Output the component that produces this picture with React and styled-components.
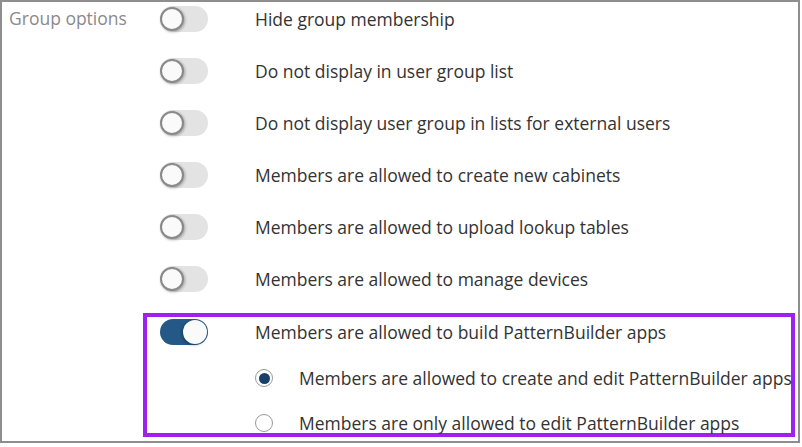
import React from "react";
import styled, { createGlobalStyle } from "styled-components";

const Global = createGlobalStyle`
  html, body { margin: 0; padding: 0; background: #fff; }
  body { font-family: "Open Sans", "Liberation Sans", sans-serif; }
  * { box-sizing: border-box; }
`;

const Panel = styled.div`
  width: 800px;
  height: 443px;
  border: 2px solid #8e8e8e;
  display: flex;
  overflow: hidden;
  background: #fff;
`;

const LabelCol = styled.div`
  width: 156px;
  flex: none;
  padding: 4px 0 0 7px;
  font-size: 17.5px;
  color: #8a8a8a;
`;

const Options = styled.div`
  flex: 1;
  display: flex;
  flex-direction: column;
  gap: 18px;
`;

const Row = styled.div`
  display: flex;
  align-items: center;
  height: ${(p) => p.$h || 34}px;
`;

const Text = styled.span`
  font-size: 17.5px;
  color: #333;
  white-space: nowrap;
`;

const Track = styled.span`
  position: relative;
  flex: none;
  width: 48px;
  height: 26px;
  margin: 0 47px 0 2px;
  border-radius: 13px;
  background: ${(p) => (p.$on ? "#245886" : "#e3e3e3")};
`;

const Knob = styled.span`
  position: absolute;
  top: 1px;
  left: ${(p) => (p.$on ? "23px" : "0px")};
  width: 24px;
  height: 24px;
  border-radius: 50%;
  background: #fafafa;
  border: ${(p) => (p.$on ? "none" : "2px solid #8a8a8a")};
  box-shadow: ${(p) =>
    p.$on ? "-1px 1px 3px rgba(0,0,0,0.35)" : "1px 1px 3px rgba(0,0,0,0.3)"};
`;

const Highlight = styled.div`
  margin: -1px 0 0 -15px;
  width: 652px;
  border: 4px solid #a020f0;
  padding: 0 0 0 11px;
  display: flex;
  flex-direction: column;
`;

const RadioRow = styled.div`
  display: flex;
  align-items: center;
  height: 20px;
  margin-left: 97px;
  margin-top: ${(p) => p.$mt}px;
`;

const Radio = styled.span`
  flex: none;
  width: 18px;
  height: 18px;
  border-radius: 50%;
  border: 1px solid #9a9a9a;
  background: #fff;
  display: flex;
  align-items: center;
  justify-content: center;
  margin-right: 26px;
  &::after {
    content: "";
    width: 11px;
    height: 11px;
    border-radius: 50%;
    background: ${(p) => (p.$checked ? "#1a3f6b" : "transparent")};
  }
`;

const Toggle = ({ on }) => (
  <Track $on={on}>
    <Knob $on={on} />
  </Track>
);

const items = [
  "Hide group membership",
  "Do not display in user group list",
  "Do not display user group in lists for external users",
  "Members are allowed to create new cabinets",
  "Members are allowed to upload lookup tables",
  "Members are allowed to manage devices",
];

export default function App() {
  return (
    <>
      <Global />
      <Panel>
        <LabelCol>Group options</LabelCol>
        <Options>
          {items.map((t) => (
            <Row key={t}>
              <Toggle on={false} />
              <Text>{t}</Text>
            </Row>
          ))}
          <Highlight>
            <Row $h={30}>
              <Toggle on />
              <Text>Members are allowed to build PatternBuilder apps</Text>
            </Row>
            <RadioRow $mt={21}>
              <Radio $checked />
              <Text>Members are allowed to create and edit PatternBuilder apps</Text>
            </RadioRow>
            <RadioRow $mt={25}>
              <Radio />
              <Text>Members are only allowed to edit PatternBuilder apps</Text>
            </RadioRow>
          </Highlight>
        </Options>
      </Panel>
    </>
  );
}
